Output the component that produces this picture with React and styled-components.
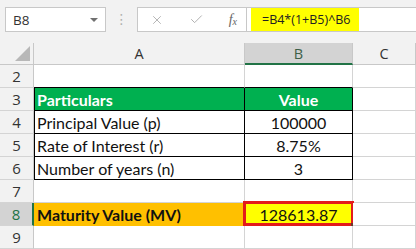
import styled, { createGlobalStyle } from "styled-components";
import { X, Check } from "lucide-react";

const GlobalStyle = createGlobalStyle`
  html, body {
    margin: 0;
    padding: 0;
    background: #ffffff;
  }
  * {
    box-sizing: border-box;
  }
`;

const rows = [
  { n: 2 },
  { n: 3, a: "Particulars", b: "Value", head: true },
  { n: 4, a: "Principal Value (p)", b: "100000", boxed: true },
  { n: 5, a: "Rate of Interest (r)", b: "8.75%", boxed: true },
  { n: 6, a: "Number of years (n)", b: "3", boxed: true },
  { n: 7 },
  { n: 8, a: "Maturity Value (MV)", b: "128613.87", result: true },
  { n: 9 },
];

const App = () => {
  return (
    <Window>
      <GlobalStyle />
      <FormulaBar>
        <NameBox>
          B8
          <Caret />
        </NameBox>
        <Grip>⋮</Grip>
        <FuncBox>
          <X size={14} strokeWidth={1.4} color="#a6a6a6" />
          <Check size={15} strokeWidth={1.4} color="#a6a6a6" />
          <Fx>
            f<sub>x</sub>
          </Fx>
        </FuncBox>
        <FormulaInput>
          <Highlight>=B4*(1+B5)^B6</Highlight>
        </FormulaInput>
      </FormulaBar>

      <Sheet>
        <Corner>
          <svg width="15" height="15" viewBox="0 0 15 15">
            <polygon points="15,0 15,15 0,15" fill="#b8b8b8" />
          </svg>
        </Corner>
        <ColHead>A</ColHead>
        <ColHead $selected>B</ColHead>
        <ColHead>C</ColHead>

        {rows.map((r) => {
          const framed = r.head || r.boxed;
          const fill = r.head ? "#00b050" : r.result ? "#ffc000" : null;
          return [
            <RowHead key={`h${r.n}`} $selected={r.result}>
              {r.n}
            </RowHead>,
            <Cell
              key={`a${r.n}`}
              $fill={fill}
              $bold={r.head || r.result}
              $color={r.head ? "#ffffff" : "#111111"}
              $frame={framed}
              $frameLeft={framed}
              $frameBottom={r.n === 2}
            >
              {r.a}
            </Cell>,
            <Cell
              key={`b${r.n}`}
              $fill={r.result ? "#ffff00" : fill}
              $bold={r.head}
              $color={r.head ? "#ffffff" : "#111111"}
              $center
              $frame={framed}
              $frameBottom={r.n === 2}
            >
              {r.b}
              {r.result && (
                <>
                  <ActiveBorder />
                  <FillHandle />
                </>
              )}
            </Cell>,
            <Cell key={`c${r.n}`} />,
          ];
        })}
      </Sheet>
    </Window>
  );
};

const Window = styled.div`
  width: 416px;
  height: 249px;
  overflow: hidden;
  background: #ffffff;
`;

const FormulaBar = styled.div`
  display: flex;
  align-items: flex-start;
  height: 43px;
  padding: 7px 0 0 5px;
  background: #f2f2f2;
`;

const NameBox = styled.div`
  position: relative;
  display: flex;
  align-items: center;
  width: 101px;
  height: 25px;
  padding-left: 7px;
  background: #ffffff;
  border: 1px solid #c8c8c8;
  font-family: "Open Sans", "Liberation Sans", sans-serif;
  font-size: 13.5px;
  color: #333333;
`;

const Caret = styled.span`
  position: absolute;
  right: 7px;
  top: 10px;
  border-left: 4px solid transparent;
  border-right: 4px solid transparent;
  border-top: 4px solid #707070;
`;

const Grip = styled.div`
  width: 31px;
  height: 25px;
  line-height: 25px;
  text-align: center;
  font-family: "DejaVu Sans", sans-serif;
  font-size: 14px;
  color: #b0b0b0;
`;

const FuncBox = styled.div`
  display: flex;
  align-items: center;
  justify-content: space-between;
  width: 109px;
  height: 25px;
  padding: 0 9px 0 12px;
  background: #ffffff;
  border: 1px solid #c8c8c8;
  border-right: none;
`;

const Fx = styled.span`
  font-family: "Liberation Serif", serif;
  font-style: italic;
  font-size: 14px;
  color: #666666;
  sub {
    font-size: 10px;
    vertical-align: -1px;
  }
`;

const FormulaInput = styled.div`
  flex: 1;
  display: flex;
  align-items: stretch;
  height: 25px;
  padding: 0 0 0 4px;
  background: #ffffff;
  border: 1px solid #c8c8c8;
  border-right: none;
`;

const Highlight = styled.span`
  display: flex;
  align-items: center;
  width: 108px;
  padding: 0 0 0 11px;
  background: #ffff00;
  font-family: "Open Sans", "Liberation Sans", sans-serif;
  font-size: 12.5px;
  color: #222222;
  white-space: nowrap;
`;

const Sheet = styled.div`
  display: grid;
  grid-template-columns: 34px 211px 108px 1fr;
  grid-template-rows: 22px repeat(8, 23px);
`;

const Corner = styled.div`
  display: flex;
  align-items: flex-end;
  justify-content: flex-end;
  padding: 0 3px 3px 0;
  background: #f2f2f2;
  border-right: 1px solid #c8c8c8;
  border-bottom: 1px solid #c8c8c8;
`;

const ColHead = styled.div`
  display: flex;
  align-items: center;
  justify-content: center;
  background: ${(p) => (p.$selected ? "#d3d3d3" : "#f2f2f2")};
  border-right: 1px solid #c8c8c8;
  border-bottom: ${(p) => (p.$selected ? "2px solid #217346" : "1px solid #c8c8c8")};
  font-family: "Open Sans", "Liberation Sans", sans-serif;
  font-size: 14.5px;
  color: ${(p) => (p.$selected ? "#3d5f48" : "#333333")};
`;

const RowHead = styled.div`
  display: flex;
  align-items: center;
  justify-content: center;
  background: ${(p) => (p.$selected ? "#d3d3d3" : "#f2f2f2")};
  border-right: ${(p) => (p.$selected ? "2px solid #217346" : "1px solid #c8c8c8")};
  border-bottom: 1px solid #d4d4d4;
  font-family: "Open Sans", "Liberation Sans", sans-serif;
  font-size: 15px;
  color: ${(p) => (p.$selected ? "#217346" : "#333333")};
`;

const Cell = styled.div`
  position: relative;
  display: flex;
  align-items: center;
  justify-content: ${(p) => (p.$center ? "center" : "flex-start")};
  padding: 0 3px;
  background: ${(p) => p.$fill || "#ffffff"};
  border-right: 1px solid ${(p) => (p.$frame ? "#000000" : p.$fill || "#d4d4d4")};
  border-bottom: 1px solid
    ${(p) => (p.$frame || p.$frameBottom ? "#000000" : p.$fill || "#d4d4d4")};
  box-shadow: ${(p) => (p.$frameLeft ? "inset 1px 0 0 #000000" : "none")};
  font-family: Lato, "Liberation Sans", sans-serif;
  font-size: 16px;
  font-weight: ${(p) => (p.$bold ? 700 : 400)};
  color: ${(p) => p.$color || "#111111"};
  white-space: nowrap;
`;

const ActiveBorder = styled.span`
  position: absolute;
  inset: -2px -2px -1px -2px;
  border: 3px solid #e31b1b;
  pointer-events: none;
`;

const FillHandle = styled.span`
  position: absolute;
  right: -4px;
  bottom: -3px;
  width: 5px;
  height: 5px;
  background: #6b3d2a;
`;

export default App;
